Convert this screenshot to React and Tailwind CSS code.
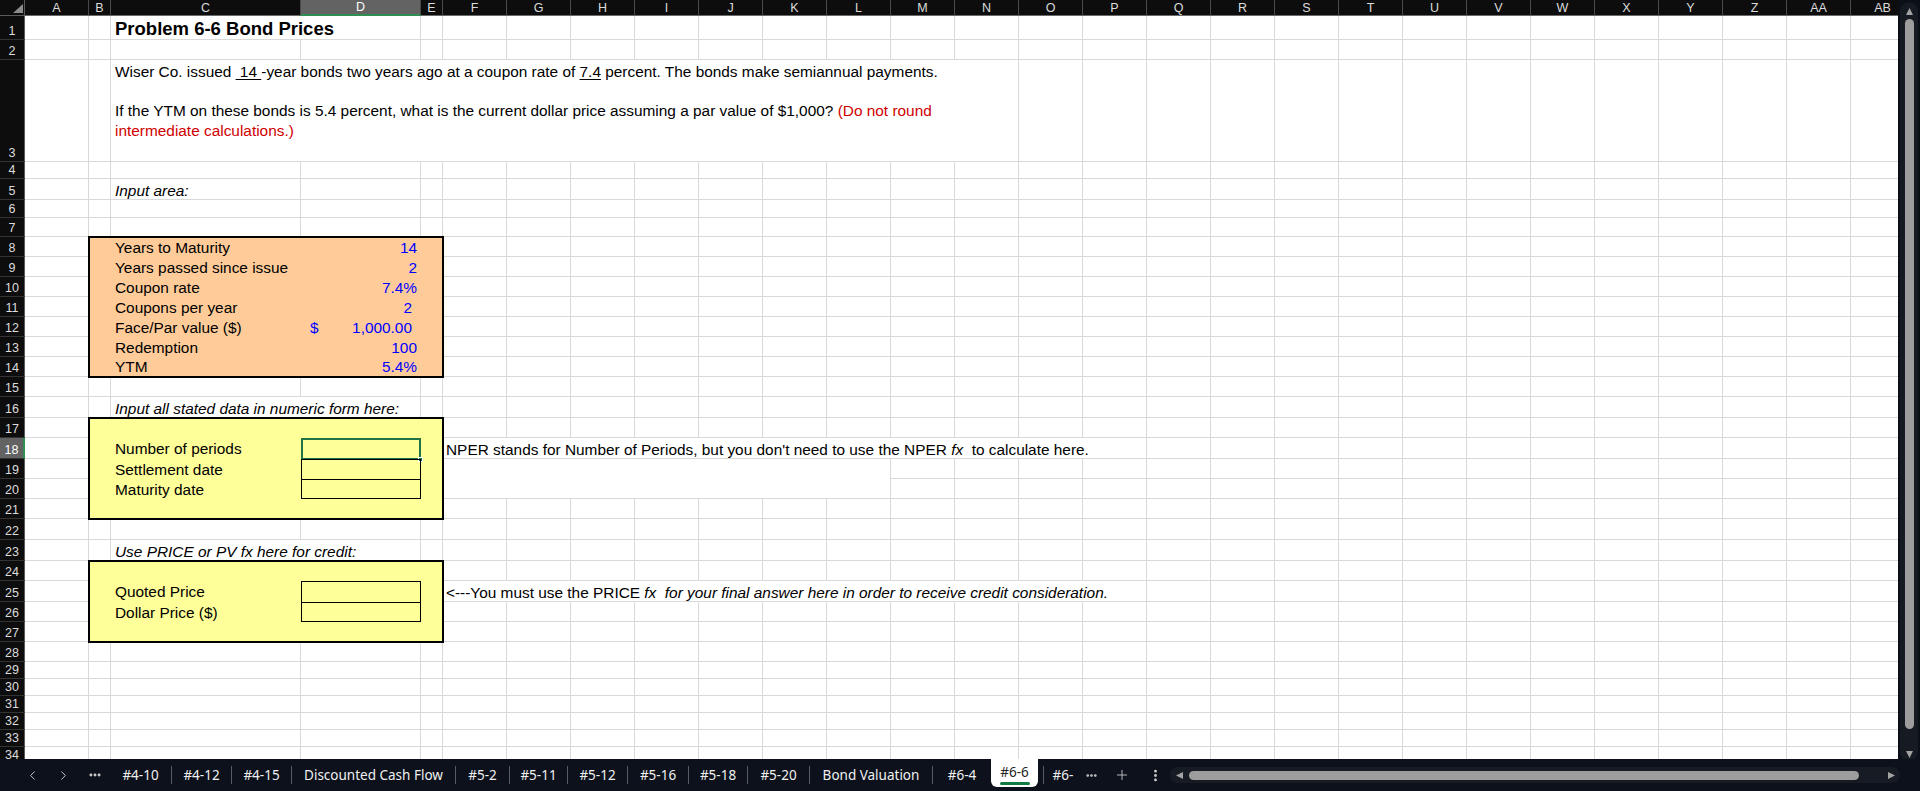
import React from "react";
import { ChevronLeft, ChevronRight, Ellipsis, EllipsisVertical, Plus } from "lucide-react";

const LETTERS = ["A","B","C","D","E","F","G","H","I","J","K","L","M","N","O","P","Q","R","S","T","U","V","W","X","Y","Z","AA","AB"];
const ROWS = Array.from({ length: 34 }, (_, i) => i + 1);

const place = (r1, r2, c1, c2) => ({
  gridRow: `${r1 + 1} / ${r2 + 2}`,
  gridColumn: `${c1 + 1} / ${c2 + 2}`,
});

const CELL = "bg-white border-r border-b border-[#d9d9d9]";

function Triangle({ dir, size = 6 }) {
  const pts = {
    up: `0,${size} ${size},${size} ${size / 2},0`,
    down: `0,0 ${size},0 ${size / 2},${size}`,
    left: `${size},0 ${size},${size} 0,${size / 2}`,
    right: `0,0 0,${size} ${size},${size / 2}`,
  }[dir];
  return (
    <svg width={size} height={size} viewBox={`0 0 ${size} ${size}`} className="shrink-0">
      <polygon points={pts} fill="#a3a3a3" />
    </svg>
  );
}

function InputCell({ last, selected }) {
  return (
    <div className={"relative border-l border-r border-t border-black " + (last ? "border-b " : "")}>
      {selected && (
        <>
          <div className="absolute -left-px -right-px -top-px -bottom-px border-2 border-[#217346]" />
          <div className="absolute -right-[3px] -bottom-[3px] w-[5px] h-[5px] bg-[#217346] border border-white" />
        </>
      )}
    </div>
  );
}

const orangeRows = [
  ["Years to Maturity", "14", "pr-[4px]"],
  ["Years passed since issue", "2", "pr-[4px]"],
  ["Coupon rate", "7.4%", "pr-[4px]"],
  ["Coupons per year", "2", "pr-[9px]"],
  ["Face/Par value ($)", "$", "acct"],
  ["Redemption", "100", "pr-[4px]"],
  ["YTM", "5.4%", "pr-[4px]"],
];

const REGIONS = [
  {
    r1: 1, r2: 1, c1: 3, c2: 4,
    node: (
      <div className={CELL + " flex items-end pl-[4px] whitespace-nowrap"}>
        <span className="text-[18.5px] leading-[20px] font-bold">Problem 6-6 Bond Prices</span>
      </div>
    ),
  },
  {
    r1: 3, r2: 3, c1: 3, c2: 14,
    node: (
      <div className={CELL + " pl-[4px] pt-[2px] text-[15.4px] leading-[19.7px] whitespace-nowrap"}>
        <div>
          Wiser Co. issued <span className="underline underline-offset-[2px]">&nbsp;14&nbsp;</span>-year bonds two years ago at a coupon rate of{" "}
          <span className="underline underline-offset-[2px]">7.4</span> percent. The bonds make semiannual payments.
        </div>
        <div>&nbsp;</div>
        <div>
          If the YTM on these bonds is 5.4 percent, what is the current dollar price assuming a par value of $1,000?{" "}
          <span className="text-[#d00000]">(Do not round</span>
        </div>
        <div className="text-[#d00000]">intermediate calculations.)</div>
      </div>
    ),
  },
  {
    r1: 5, r2: 5, c1: 3, c2: 3,
    node: (
      <div className={CELL + " flex items-end pl-[4px] whitespace-nowrap"}>
        <span className="text-[15.4px] leading-[16px] italic">Input area:</span>
      </div>
    ),
  },
  {
    r1: 16, r2: 16, c1: 3, c2: 4,
    node: (
      <div className={CELL + " flex items-end pl-[4px] whitespace-nowrap"}>
        <span className="text-[15.4px] leading-[16px] italic">Input all stated data in numeric form here:</span>
      </div>
    ),
  },
  {
    r1: 23, r2: 23, c1: 3, c2: 4,
    node: (
      <div className={CELL + " flex items-end pl-[4px] whitespace-nowrap"}>
        <span className="text-[15.4px] leading-[16px] italic">Use PRICE or PV fx here for credit:</span>
      </div>
    ),
  },
  {
    r1: 18, r2: 18, c1: 6, c2: 16,
    node: (
      <div className={CELL + " flex items-end pl-[3px] whitespace-nowrap"}>
        <span className="text-[15.4px] leading-[16px]">
          NPER stands for Number of Periods, but you don't need to use the NPER <i>fx</i>&nbsp; to calculate here.
        </span>
      </div>
    ),
  },
  {
    r1: 19, r2: 20, c1: 6, c2: 12,
    node: <div className={CELL} />,
  },
  {
    r1: 25, r2: 25, c1: 6, c2: 16,
    node: (
      <div className={CELL + " flex items-end pl-[3px] whitespace-nowrap"}>
        <span className="text-[15.4px] leading-[16px]">
          &lt;---You must use the PRICE <i>fx&nbsp; for your final answer here in order to receive credit consideration.</i>
        </span>
      </div>
    ),
  },
  {
    r1: 8, r2: 14, c1: 2, c2: 5,
    node: (
      <div className="-m-px bg-[#ffcc99] border-2 border-black grid grid-cols-[21px_190px_120px_21px] grid-rows-[19px_repeat(5,20px)_19px] text-[15.4px] leading-[16px]">
        {orangeRows.map(([label, value, kind]) => (
          <React.Fragment key={label}>
            <div />
            <div className="flex items-end pl-[4px] pb-[1px] whitespace-nowrap">{label}</div>
            {kind === "acct" ? (
              <div className="flex items-end justify-between pl-[9px] pr-[9px] pb-[1px] text-[#0000ff]">
                <span>$</span>
                <span>1,000.00</span>
              </div>
            ) : (
              <div className={"flex items-end justify-end pb-[1px] text-[#0000ff] " + kind}>{value}</div>
            )}
            <div />
          </React.Fragment>
        ))}
      </div>
    ),
  },
  {
    r1: 17, r2: 21, c1: 2, c2: 5,
    node: (
      <div className="-m-px bg-[#ffff99] border-2 border-black grid grid-cols-[21px_190px_120px_21px] grid-rows-[19px_21px_20px_20px_19px] text-[15.4px] leading-[16px]">
        <div /><div /><div /><div />
        <div /><div className="flex items-end pl-[4px] pb-[2px] whitespace-nowrap">Number of periods</div><InputCell selected /><div />
        <div /><div className="flex items-end pl-[4px] pb-[1px] whitespace-nowrap">Settlement date</div><InputCell /><div />
        <div /><div className="flex items-end pl-[4px] pb-[1px] whitespace-nowrap">Maturity date</div><InputCell last /><div />
        <div /><div /><div /><div />
      </div>
    ),
  },
  {
    r1: 24, r2: 27, c1: 2, c2: 5,
    node: (
      <div className="-m-px bg-[#ffff99] border-2 border-black grid grid-cols-[21px_190px_120px_21px] grid-rows-[19px_21px_20px_19px] text-[15.4px] leading-[16px]">
        <div /><div /><div /><div />
        <div /><div className="flex items-end pl-[4px] pb-[2px] whitespace-nowrap">Quoted Price</div><InputCell /><div />
        <div /><div className="flex items-end pl-[4px] pb-[1px] whitespace-nowrap">Dollar Price ($)</div><InputCell last /><div />
        <div /><div /><div /><div />
      </div>
    ),
  },
];

function Sheet() {
  const covered = new Set();
  REGIONS.forEach((g) => {
    for (let r = g.r1; r <= g.r2; r++) for (let c = g.c1; c <= g.c2; c++) covered.add(`${r}-${c}`);
  });

  return (
    <div className="w-[1898px] h-[759px] overflow-hidden bg-white">
      <div className="grid grid-cols-[25px_64px_22px_190px_120px_22px_repeat(23,64px)] grid-rows-[16px_24px_20px_102px_17px_21px_18px_19px_repeat(8,20px)_21px_20px_21px_20px_20px_20px_21px_21px_20px_21px_20px_20px_20px_repeat(6,17px)] font-['Liberation_Sans',Arial,sans-serif] text-black">
        <div style={place(0, 0, 0, 0)} className="bg-[#0d0d0d] border-r border-b border-[#5a5a5a] flex items-end justify-end pr-[1px] pb-[2px]">
          <svg width="10" height="9" viewBox="0 0 10 9">
            <polygon points="10,0 10,9 0,9" fill="#8c8c8c" />
          </svg>
        </div>
        {LETTERS.map((L, i) => (
          <div
            key={L}
            style={place(0, 0, i + 1, i + 1)}
            className={
              "flex items-center justify-center overflow-visible border-r border-[#4a4a4a] font-['Liberation_Sans',Arial,sans-serif] text-[12.5px] leading-[14px] " +
              (L === "D"
                ? "bg-[#636363] text-white border-b-2 border-b-[#2f8f53]"
                : "bg-[#0d0d0d] text-[#dcdcdc] border-b border-b-[#6a6a6a]")
            }
          >
            {L}
          </div>
        ))}
        {ROWS.map((r) => (
          <div
            key={"rh" + r}
            style={place(r, r, 0, 0)}
            className={
              "flex items-end justify-center pb-[1px] border-b border-b-[#333333] font-['Liberation_Sans',Arial,sans-serif] text-[12.5px] leading-[14px] " +
              (r === 18
                ? "bg-[#636363] text-white border-r-2 border-r-[#2f8f53]"
                : "bg-[#0d0d0d] text-[#dcdcdc] border-r border-r-[#5a5a5a]")
            }
          >
            {r}
          </div>
        ))}
        {ROWS.map((r) =>
          LETTERS.map((L, i) =>
            covered.has(`${r}-${i + 1}`) ? null : (
              <div key={`${r}-${L}`} style={place(r, r, i + 1, i + 1)} className={CELL} />
            )
          )
        )}
        {REGIONS.map((g, k) => (
          <div key={"g" + k} style={place(g.r1, g.r2, g.c1, g.c2)} className="flex flex-col [&>*]:flex-1">
            {g.node}
          </div>
        ))}
      </div>
    </div>
  );
}

function VScroll() {
  return (
    <div className="w-[22px] h-[759px] bg-[#0b0f17] pl-[2px] pr-[2px] pt-[2px]">
      <div className="h-[759px] rounded-[9px] bg-[#151a23] flex flex-col items-center pt-[6px]">
        <Triangle dir="up" size={7} />
        <div className="mt-[4px] w-[9px] h-[710px] rounded-full bg-[#9d9d9d]" />
        <div className="mt-[22px]">
          <Triangle dir="down" size={7} />
        </div>
      </div>
    </div>
  );
}

const tabs = [
  ["#4-10", "w-[61px]"],
  ["#4-12", "w-[59px]"],
  ["#4-15", "w-[59px]"],
  ["Discounted Cash Flow", "w-[163px]"],
  ["#5-2", "w-[53px]"],
  ["#5-11", "w-[57px]"],
  ["#5-12", "w-[59px]"],
  ["#5-16", "w-[60px]"],
  ["#5-18", "w-[58px]"],
  ["#5-20", "w-[61px]"],
  ["Bond Valuation", "w-[122px]"],
];

function Sep() {
  return <div className="w-px h-[18px] bg-[#565c68] shrink-0" />;
}

function TabBar() {
  return (
    <div className="h-[32px] w-[1920px] bg-[#0c111b] flex items-center pl-[17px] font-['Noto_Sans',sans-serif] text-[13.5px] text-[#f0f0f0]">
      <div className="w-[31px] flex justify-center text-[#d0d0d0]">
        <ChevronLeft size={15} strokeWidth={1.5} />
      </div>
      <div className="w-[31px] flex justify-center text-[#d0d0d0]">
        <ChevronRight size={15} strokeWidth={1.5} />
      </div>
      <div className="w-[31px] flex justify-center text-[#d0d0d0]">
        <Ellipsis size={14} strokeWidth={3} />
      </div>
      {tabs.map(([t, w]) => (
        <React.Fragment key={t}>
          <div className={w + " shrink-0 text-center whitespace-nowrap"}>{t}</div>
          <Sep />
        </React.Fragment>
      ))}
      <div className="w-[58px] shrink-0 text-center">#6-4</div>
      <div className="self-start w-[47px] h-[28px] bg-white rounded-b-[6px] flex flex-col items-center pt-[4px] shrink-0">
        <span className="leading-[18px] text-[#242424]">#6-6</span>
        <div className="mt-[1px] w-[30px] h-[3px] rounded-full bg-[#107c41]" />
      </div>
      <div className="w-[5px] shrink-0" />
      <Sep />
      <div className="w-[38px] shrink-0 text-center">#6-</div>
      <div className="w-[18px] flex justify-center text-[#d0d0d0]">
        <Ellipsis size={13} strokeWidth={3} />
      </div>
      <div className="w-[44px] flex justify-center text-[#d0d0d0]">
        <Plus size={16} strokeWidth={1.3} />
      </div>
      <div className="w-[22px] flex justify-center text-[#d0d0d0]">
        <EllipsisVertical size={15} strokeWidth={2.5} />
      </div>
      <div className="ml-[4px] w-[730px] h-[16px] rounded-full bg-[#161b24] flex items-center pl-[6px]">
        <Triangle dir="left" size={7} />
        <div className="ml-[6px] w-[670px] h-[9px] rounded-full bg-[#9d9d9d]" />
        <div className="ml-[29px]">
          <Triangle dir="right" size={7} />
        </div>
      </div>
    </div>
  );
}

export default function App() {
  return (
    <div className="w-[1920px] h-[791px] overflow-hidden flex flex-col bg-[#0c111b]">
      <div className="flex h-[759px]">
        <Sheet />
        <VScroll />
      </div>
      <TabBar />
    </div>
  );
}
